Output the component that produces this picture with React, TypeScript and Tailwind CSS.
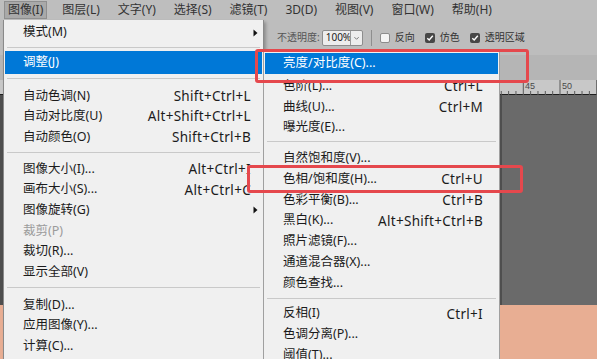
import React from "react";

type Row =
  | {
      kind: "item";
      label: string;
      shortcut?: string;
      arrow?: boolean;
      disabled?: boolean;
      active?: boolean;
    }
  | { kind: "sep"; cls: string };

const MENU_BAR = ["图像(I)", "图层(L)", "文字(Y)", "选择(S)", "滤镜(T)", "3D(D)", "视图(V)", "窗口(W)", "帮助(H)"];

const IMAGE_MENU: Row[] = [
  { kind: "item", label: "模式(M)", arrow: true },
  { kind: "sep", cls: "h-[7.8px] pt-[3.5px]" },
  { kind: "item", label: "调整(J)", active: true },
  { kind: "sep", cls: "h-[11.6px] pt-[3.8px]" },
  { kind: "item", label: "自动色调(N)", shortcut: "Shift+Ctrl+L" },
  { kind: "item", label: "自动对比度(U)", shortcut: "Alt+Shift+Ctrl+L" },
  { kind: "item", label: "自动颜色(O)", shortcut: "Shift+Ctrl+B" },
  { kind: "sep", cls: "h-[11px] pt-[4px]" },
  { kind: "item", label: "图像大小(I)...", shortcut: "Alt+Ctrl+I" },
  { kind: "item", label: "画布大小(S)...", shortcut: "Alt+Ctrl+C" },
  { kind: "item", label: "图像旋转(G)", arrow: true },
  { kind: "item", label: "裁剪(P)", disabled: true },
  { kind: "item", label: "裁切(R)..." },
  { kind: "item", label: "显示全部(V)" },
  { kind: "sep", cls: "h-[11.8px] pt-[4px]" },
  { kind: "item", label: "复制(D)..." },
  { kind: "item", label: "应用图像(Y)..." },
  { kind: "item", label: "计算(C)..." },
];

const ADJUST_MENU: Row[] = [
  { kind: "item", label: "亮度/对比度(C)...", active: true },
  { kind: "item", label: "色阶(L)...", shortcut: "Ctrl+L" },
  { kind: "item", label: "曲线(U)...", shortcut: "Ctrl+M" },
  { kind: "item", label: "曝光度(E)..." },
  { kind: "sep", cls: "h-[10.5px] pt-[3.5px]" },
  { kind: "item", label: "自然饱和度(V)..." },
  { kind: "item", label: "色相/饱和度(H)...", shortcut: "Ctrl+U" },
  { kind: "item", label: "色彩平衡(B)...", shortcut: "Ctrl+B" },
  { kind: "item", label: "黑白(K)...", shortcut: "Alt+Shift+Ctrl+B" },
  { kind: "item", label: "照片滤镜(F)..." },
  { kind: "item", label: "通道混合器(X)..." },
  { kind: "item", label: "颜色查找..." },
  { kind: "sep", cls: "h-[10.1px] pt-[4.4px]" },
  { kind: "item", label: "反相(I)", shortcut: "Ctrl+I" },
  { kind: "item", label: "色调分离(P)..." },
  { kind: "item", label: "阈值(T)..." },
];

function Arrow() {
  return (
    <svg width="5" height="8" viewBox="0 0 5 8" className="shrink-0">
      <path d="M0.5 0.5 L4.5 4 L0.5 7.5 Z" fill="#111" />
    </svg>
  );
}

function Checkbox({ checked }: { checked?: boolean }) {
  if (!checked) {
    return <span className="h-[10px] w-[10px] rounded-[2px] border border-[#8c8c8c] bg-[#f4f4f4]" />;
  }
  return (
    <span className="flex h-[10px] w-[10px] items-center justify-center rounded-[2px] bg-[#474747]">
      <svg width="8" height="8" viewBox="0 0 8 8">
        <path d="M1.3 4.2 L3.2 6 L6.8 1.8" fill="none" stroke="#fff" strokeWidth="1.4" />
      </svg>
    </span>
  );
}

function MenuRows({ rows, sub }: { rows: Row[]; sub?: boolean }) {
  return (
    <>
      {rows.map((r, i) => {
        if (r.kind === "sep") {
          return (
            <div key={i} className={r.cls}>
              <div className="mx-[2px] h-px bg-[#c9c9c9]" />
            </div>
          );
        }
        const height = r.active ? (sub ? "h-[21px] mb-[1.85px]" : "h-[23px]") : "h-[20.7px]";
        const color = r.active ? "bg-[#0078d7] text-white" : r.disabled ? "text-[#9b9b9b]" : "text-[#1b1b1b]";
        const pad = sub ? "pl-[18px] pr-[15px]" : r.arrow ? "pl-[18px] pr-[4px]" : "pl-[18px] pr-[11px]";
        return (
          <div key={i} className={`flex items-center whitespace-nowrap ${height} ${color} ${pad}`}>
            <span>{r.label}</span>
            {r.shortcut && <span className="ml-auto text-[13.5px] tracking-[0.3px]">{r.shortcut}</span>}
            {r.arrow && (
              <span className="ml-auto">
                <Arrow />
              </span>
            )}
          </div>
        );
      })}
    </>
  );
}

function Ruler() {
  const ticks = [];
  const origin = 523.3 - 45 * 7.34;
  for (let u = 0; u <= 60; u++) {
    const x = origin + u * 7.34;
    const major = u % 5 === 0;
    ticks.push(<line key={u} x1={x} x2={x} y1={major ? 0 : 11} y2={15} stroke="#5a5a5a" strokeWidth="1" />);
  }
  return (
    <svg width="597" height="15" className="block">
      {ticks}
      <text x="525" y="9" fontSize="9" fill="#4a4a4a" fontFamily="Liberation Sans, sans-serif">45</text>
      <text x="562" y="9" fontSize="9" fill="#4a4a4a" fontFamily="Liberation Sans, sans-serif">50</text>
    </svg>
  );
}

export default function App() {
  return (
    <div className="relative h-[359px] w-[597px] overflow-hidden bg-[#bdbdbd] font-['Noto_Sans','Noto_Sans_CJK_SC',sans-serif]">
      {/* menu bar */}
      <div className="flex h-[20px] items-center gap-[12px] bg-[#bebebe] pl-[4px] text-[12px] text-[#333]">
        {MENU_BAR.map((m, i) => (
          <div
            key={m}
            className={`flex h-[18px] items-center px-[3px] ${i === 0 ? "border border-[#8f8f8f] bg-[#a9a9a9]" : ""}`}
          >
            {m}
          </div>
        ))}
      </div>

      {/* options bar */}
      <div className="flex h-[35px] items-center bg-[#bdbdbd] pl-[277px] text-[10px] text-[#555]">
        <span>不透明度:</span>
        <div className="ml-[2px] flex h-[16px] w-[41px] items-center rounded-[2px] border border-[#8d8d8d] bg-[#ededed] text-[#222]">
          <span className="w-[27px] pl-[3px] text-[10px]">100%</span>
          <span className="h-full w-px bg-[#9a9a9a]" />
          <svg width="13" height="14" viewBox="0 0 13 14">
            <path d="M4 6 L6.5 8.5 L9 6" fill="none" stroke="#666" strokeWidth="1" />
          </svg>
        </div>
        <span className="ml-[8px] h-[16px] w-px bg-[#8e8e8e]" />
        <span className="ml-[8px] flex items-center">
          <Checkbox />
        </span>
        <span className="ml-[5px] text-[#333]">反向</span>
        <span className="ml-[10px] flex items-center">
          <Checkbox checked />
        </span>
        <span className="ml-[5px] text-[#333]">仿色</span>
        <span className="ml-[10px] flex items-center">
          <Checkbox checked />
        </span>
        <span className="ml-[5px] text-[#333]">透明区域</span>
      </div>

      {/* tab bar */}
      <div className="h-[25px] bg-[#b5b5b5]" />

      {/* ruler */}
      <div className="h-[15px] border-b border-[#1e1e1e] bg-[#c8c8c8]">
        <Ruler />
      </div>

      {/* canvas */}
      <div className="flex h-[210px]">
        <div className="w-[502px] bg-[#4e4e4e]" />
        <div className="flex-1 bg-[#6a6a6a]" />
      </div>
      <div className="h-[60px] bg-[#e8ae93]" />

      {/* image menu */}
      <div className="absolute left-[3px] top-[20px] h-[345px] w-[261px] border-l border-r border-[#8a8a8a] bg-[#f0f0f0] px-[1px] pt-[2.5px] text-[12.5px] shadow-[2px_2px_3px_rgba(0,0,0,0.25)]">
        <MenuRows rows={IMAGE_MENU} />
      </div>

      {/* adjustments submenu */}
      <div className="absolute left-[263px] top-[50px] h-[320px] w-[237px] border border-[#a0a0a0] bg-[#f0f0f0] px-[1px] pt-[2px] text-[12.5px]">
        <MenuRows rows={ADJUST_MENU} sub />
      </div>

      {/* annotations */}
      <div className="absolute left-[255px] top-[49px] h-[34px] w-[274px] rounded-[3px] border-[3px] border-[#e5484d]" />
      <div className="absolute left-[247px] top-[165px] h-[28px] w-[276px] rounded-[3px] border-[3px] border-[#e5484d]" />
    </div>
  );
}
